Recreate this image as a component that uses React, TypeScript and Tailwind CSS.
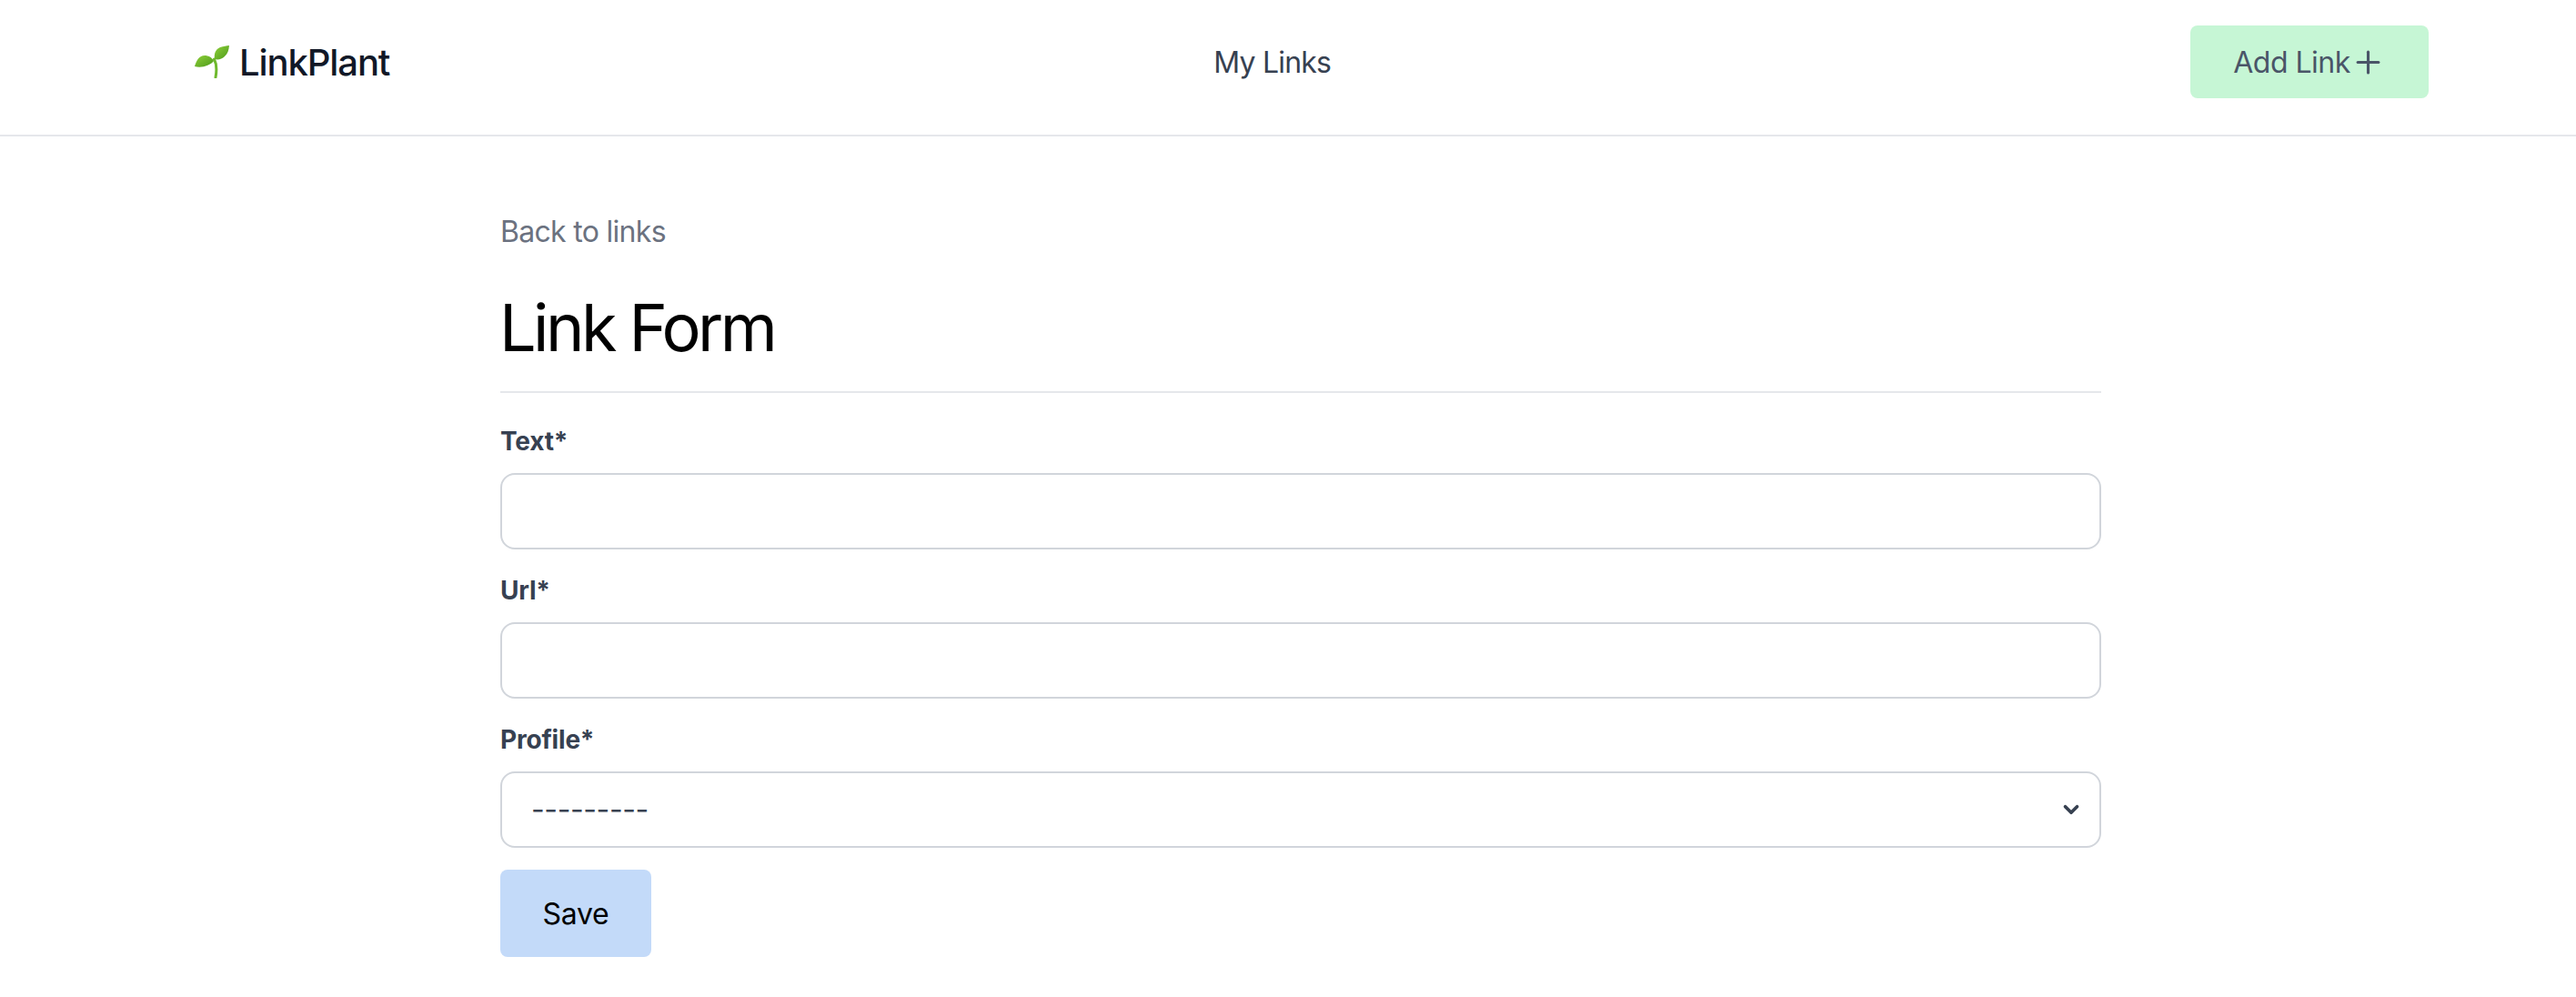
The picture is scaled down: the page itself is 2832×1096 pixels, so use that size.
import { ChevronDown, Plus } from "lucide-react";

function Seedling() {
  return (
    <svg className="w-[40px] h-[36px] -mt-[2px]" viewBox="0 0 40 36" fill="none">
      <defs>
        <linearGradient id="leaf" x1="0" y1="0" x2="1" y2="1">
          <stop offset="0" stopColor="#8fd03a" />
          <stop offset="1" stopColor="#4c9a1a" />
        </linearGradient>
      </defs>
      <path d="M22.500 15C25 20 25.500 27 24 35" stroke="#6fb92e" strokeWidth="3" strokeLinecap="round" />
      <path d="M1 23C3 16 6 11 12 11C16 11 20 13 22 17C18 22 9 25 1 23Z" fill="url(#leaf)" />
      <path d="M23 15C22 9 24 4 29 2C33 .7 36 .5 39 0C38.500 5 37.500 9 34 12C31 15 27 16 23 15Z" fill="url(#leaf)" />
    </svg>
  );
}

function Field({ label }: { label: string }) {
  return (
    <div className="mb-[24px]">
      <label className="block pt-[1px] mb-[15px] text-[28px] leading-[40px] font-bold tracking-[-0.2px] text-[#374151]">
        {label}
      </label>
      <input
        type="text"
        className="block w-full h-[84px] px-[34px] bg-white border-2 border-[#d1d5db] rounded-[16px] outline-none"
      />
    </div>
  );
}

export default function App() {
  return (
    <div className="min-h-[1096px] bg-white font-['Inter',sans-serif]">
      <nav className="h-[150px] pt-[28px] pl-[213px] pr-[162px] flex items-start justify-between border-b-2 border-[#e5e7eb]">
        <a className="h-[80px] pt-[2px] flex items-center gap-[10px] text-[40px] leading-[48px] font-medium tracking-[-1.1px] text-[#111827]">
          <Seedling />
          LinkPlant
        </a>
        <a className="h-[80px] pt-[2px] flex items-center text-[32px] leading-[40px] tracking-[-0.8px] text-[#374151] ml-[-39px]">
          My Links
        </a>
        <button className="w-[262px] h-[80px] pt-[2px] flex items-center justify-center bg-[#c6f6d5] rounded-[8px] text-[32px] tracking-[-0.5px] text-[#4a5568]">
          Add Link
          <Plus size={39} strokeWidth={1.9} className="-mt-[2px]" />
        </button>
      </nav>

      <main className="w-[1760px] ml-[550px] pt-[81px]">
        <a className="block text-[32px] leading-[48px] tracking-[-0.7px] text-[#6b7280]">Back to links</a>
        <h1 className="mt-[41px] -ml-[1px] text-[72px] leading-[80px] font-normal tracking-[-3.6px] text-black">Link Form</h1>
        <div className="mt-[30px] mb-[32px] border-t-2 border-[#e5e7eb]" />
        <Field label="Text*" />
        <Field label="Url*" />
        <div className="mb-[24px]">
          <label className="block pt-[1px] mb-[15px] text-[28px] leading-[40px] font-bold tracking-[-0.2px] text-[#374151]">
            Profile*
          </label>
          <div className="relative">
            <select className="block w-full h-[84px] pl-[32px] appearance-none bg-white border-2 border-[#d1d5db] rounded-[16px] text-[32px] tracking-[-0.4px] text-[#374151] outline-none">
              <option>---------</option>
            </select>
            <ChevronDown
              size={26}
              strokeWidth={3.4}
              className="absolute right-[20px] top-[29px] text-[#374151] pointer-events-none"
            />
          </div>
        </div>
        <button className="w-[166px] h-[96px] pt-[2px] bg-[#c3daf9] rounded-[8px] text-[32px] tracking-[-0.3px] text-black">Save</button>
      </main>
    </div>
  );
}
